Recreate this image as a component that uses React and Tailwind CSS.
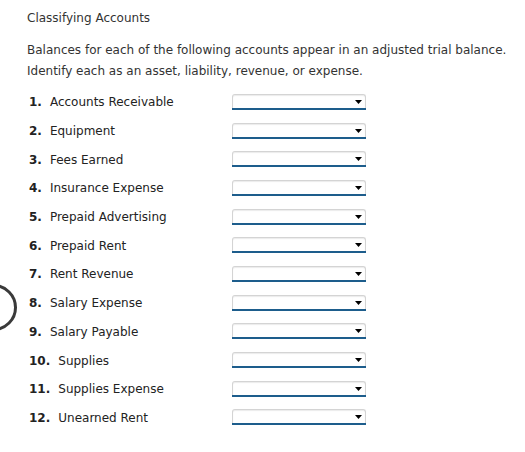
const accounts = [
  'Accounts Receivable',
  'Equipment',
  'Fees Earned',
  'Insurance Expense',
  'Prepaid Advertising',
  'Prepaid Rent',
  'Rent Revenue',
  'Salary Expense',
  'Salary Payable',
  'Supplies',
  'Supplies Expense',
  'Unearned Rent',
];

function Dropdown() {
  return (
    <div className="relative mb-[3px] w-[134px] h-[14px] rounded-t-[3px] border border-b-0 border-[#d4d4d4] bg-white shadow-[inset_0_1px_1px_rgba(0,0,0,0.08)]">
      <div className="absolute left-[-1px] right-[-1px] bottom-[-2px] h-[2px] bg-[#1d5d8c]" />
      <svg className="absolute right-[3px] top-[5px]" width="7" height="4" viewBox="0 0 7 4">
        <path d="M0 0h7L3.5 4z" fill="#000" />
      </svg>
    </div>
  );
}

export default function App() {
  return (
    <div className="relative w-[525px] h-[452px] bg-white overflow-hidden text-[#333] font-['DejaVu_Sans','Verdana',sans-serif] text-[12px]">
      <div className="absolute left-[-30px] top-[284px] w-[47px] h-[47px] rounded-full border-[3px] border-[#3a3a3a]" />
      <div className="pl-[27px] pt-[9px]">
        <div className="leading-[18px]">Classifying Accounts</div>
        <p className="mt-[13px] leading-[21px]">
          Balances for each of the following accounts appear in an adjusted trial balance.
          <br />
          Identify each as an asset, liability, revenue, or expense.
        </p>
        <div className="mt-[6px] flex flex-col">
          {accounts.map((name, i) => (
            <div key={name} className="flex items-center h-[28.7px]">
              <div className="w-[205px] pl-[2px] text-[#222]">
                <span className="font-bold mr-[8px]">{i + 1}.</span>
                {name}
              </div>
              <Dropdown />
            </div>
          ))}
        </div>
      </div>
    </div>
  );
}
